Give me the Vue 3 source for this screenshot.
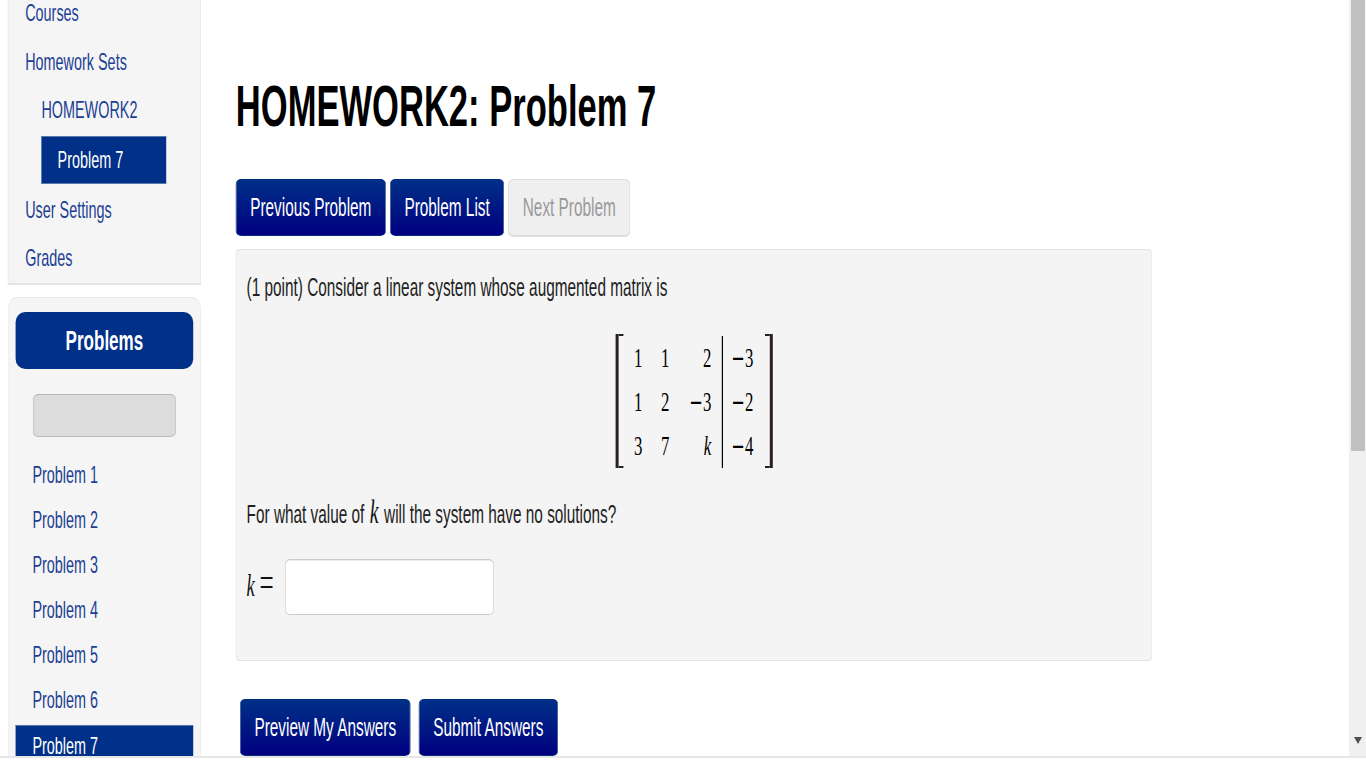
<script setup>
const topNav = [
  { label: "Courses", cls: "" },
  { label: "Homework Sets", cls: "second" },
  { label: "HOMEWORK2", cls: "sub" },
  { label: "Problem 7", cls: "sub active" },
  { label: "User Settings", cls: "" },
  { label: "Grades", cls: "" },
];

const problems = [1, 2, 3, 4, 5, 6, 7];

const matrix = [
  ["1", "1", "2", "−3"],
  ["1", "2", "−3", "−2"],
  ["3", "7", "k", "−4"],
];
</script>

<template>
  <div class="screen">
    <div class="view">
      <div class="page">
        <aside class="sidebar">
          <nav class="nav-box">
            <a
              v-for="item in topNav"
              :key="item.label"
              class="nav-link"
              :class="item.cls"
            >
              <span>{{ item.label }}</span>
            </a>
          </nav>

          <div class="problems-box">
            <h2 class="problems-title">Problems</h2>
            <div class="grey-field"></div>
            <a
              v-for="n in problems"
              :key="n"
              class="problem-link"
              :class="{ current: n === 7 }"
              >Problem {{ n }}</a
            >
          </div>
        </aside>

        <main class="content">
          <h1 class="title">HOMEWORK2: Problem 7</h1>

          <div class="btn-row">
            <a class="btn">Previous Problem</a>
            <a class="btn">Problem List</a>
            <a class="btn disabled">Next Problem</a>
          </div>

          <section class="well">
            <p class="intro">
              (1 point) Consider a linear system whose augmented matrix is
            </p>

            <div class="matrix-wrap">
              <div class="matrix">
                <template v-for="(row, r) in matrix" :key="r">
                  <span
                    v-for="(cell, c) in row"
                    :key="c"
                    class="cell"
                    :class="{ ital: cell === 'k', last: c === 3 }"
                    ><span v-if="cell[0] === '−'" class="minus">−</span
                    >{{ cell.replace("−", "") }}</span
                  >
                </template>
              </div>
            </div>

            <p class="question">
              For what value of <i class="math-k">k</i> will the system have no
              solutions?
            </p>

            <div class="answer">
              <span class="answer-label"><i>k</i> <span class="equals">=</span></span>
              <input class="answer-input" type="text" />
            </div>
          </section>

          <div class="btn-row submit-row">
            <a class="btn">Preview My Answers</a>
            <a class="btn">Submit Answers</a>
          </div>
        </main>
      </div>

      <div class="scrollbar">
        <div class="thumb"></div>
        <div class="track"></div>
        <div class="arrow"></div>
      </div>
    </div>
    <div class="bottom-strip"></div>
  </div>
</template>

<style>
html,
body {
  margin: 0;
  overflow: hidden;
  background: #fff;
}
</style>

<style scoped>
/* the whole page is squeezed horizontally, so x sizes below are px / 0.6 */
.screen {
  width: 1366px;
  height: 768px;
  overflow: hidden;
  display: flex;
  flex-direction: column;
  font-family: "Liberation Sans", Arial, sans-serif;
  font-size: 24px;
  color: #222;
}

.view {
  height: 756px;
  display: flex;
  overflow: hidden;
}

.bottom-strip {
  height: 10px;
  background: #fff;
  border-top: 2px solid #e6e6e8;
}

.page {
  flex: none;
  width: 2248px;
  margin-right: -899px;
  display: flex;
  align-items: flex-start;
  transform: scaleX(0.6);
  transform-origin: left top;
}

.sidebar {
  flex: none;
  width: 322px;
  margin-left: 13px;
}

.nav-box {
  height: 296px;
  box-sizing: border-box;
  margin-top: -11px;
  background: #f5f5f5;
  border: 1px solid #e3e3e3;
  border-top: 0;
  border-bottom-width: 2px;
  display: flex;
  flex-direction: column;
  padding-left: 28px;
}

.nav-link {
  display: block;
  flex: none;
  height: 48px;
  line-height: 48px;
  color: #1c3f94;
}

.nav-link.second {
  margin-top: 1px;
}

.nav-link.sub {
  margin-left: 27px;
  width: 208px;
}

.nav-link.active {
  background: #003087;
  color: #fff;
  box-sizing: border-box;
  padding-left: 27px;
  margin-top: 2px;
  margin-bottom: 2px;
  border-top: 1px solid #5a76ad;
  border-bottom: 1px solid #5a76ad;
  line-height: 46px;
}

.problems-box {
  margin-top: 12px;
  height: 470px;
  box-sizing: border-box;
  background: #f5f5f5;
  border: 1px solid #e8e8e8;
  border-bottom: 0;
  border-radius: 14px 14px 0 0;
  padding: 14px 12px 0;
}

.problems-title {
  margin: 0;
  height: 57px;
  line-height: 57px;
  text-align: center;
  font-size: 28.4px;
  font-weight: bold;
  color: #fff;
  background: #003087;
  border-radius: 16px / 10px;
}

.grey-field {
  height: 41px;
  margin: 25px 29px 15px;
  background: #dcdcdc;
  border: 1px solid #b8b8b8;
  border-radius: 9px / 5px;
}

.problem-link {
  display: block;
  height: 45px;
  line-height: 45px;
  padding-left: 28px;
  color: #1c3f94;
}

.problem-link.current {
  background: #003087;
  color: #fff;
  border-top: 1px solid #5a76ad;
  margin-top: 3px;
  line-height: 40px;
}

.content {
  flex: none;
  width: 1527px;
  margin-left: 58px;
  font-size: 25.6px;
}

.title {
  margin: 74px 0 0;
  height: 65px;
  line-height: 65px;
  font-size: 57.6px;
  font-weight: bold;
  color: #000;
  white-space: nowrap;
}

.btn-row {
  display: flex;
  gap: 7px;
  margin-top: 40px;
}

.btn {
  display: block;
  box-sizing: border-box;
  height: 57px;
  line-height: 55px;
  padding: 0 23px;
  color: #fff;
  white-space: nowrap;
  background: linear-gradient(#003087, #000080);
  border: 1px solid #002a7a;
  border-radius: 9px / 5px;
}

.btn.disabled {
  color: #9a9a9a;
  background: #efefef;
  border-color: #dcdcdc;
  box-shadow: 0 1px 1px #ddd;
}

.well {
  margin-top: 13px;
  height: 412px;
  box-sizing: border-box;
  background: #f4f4f4;
  border: 1px solid #e3e3e3;
  border-radius: 7px / 4px;
  padding: 23px 17px 0;
}

.intro,
.question {
  margin: 0;
  line-height: 28px;
  white-space: nowrap;
}

.matrix-wrap {
  display: flex;
  justify-content: center;
  margin-top: 33px;
}

.matrix {
  display: grid;
  grid-template-columns: 42px 45px 70px 65px;
  grid-auto-rows: 44px;
  padding: 2px 15px 0;
  border-left: 5px solid #2b2020;
  border-right: 5px solid #2b2020;
  position: relative;
  font-family: "Liberation Serif", "Times New Roman", serif;
  font-size: 28px;
  color: #000;
}

.matrix::before,
.matrix::after {
  content: "";
  position: absolute;
  top: 0;
  bottom: 0;
  width: 8px;
  border-top: 2px solid #222;
  border-bottom: 2px solid #222;
}

.matrix::before {
  left: 0;
}

.matrix::after {
  right: 0;
}

.cell {
  text-align: right;
  line-height: 44px;
  padding-right: 17px;
}

.cell.last {
  border-left: 2px solid #000;
  padding-right: 12px;
}

.cell.ital {
  font-style: italic;
}

.minus {
  font-family: "DejaVu Sans", sans-serif;
  font-size: 27px;
}

.question {
  margin-top: 30px;
}

.math-k {
  margin: 0 2px;
  font-family: "Liberation Serif", "Times New Roman", serif;
  font-size: 33px;
  color: #111;
}

.answer {
  display: flex;
  align-items: center;
  margin-top: 31px;
}

.answer-label {
  flex: none;
  width: 64px;
  padding-bottom: 10px;
  line-height: 1;
  font-family: "Liberation Serif", "Times New Roman", serif;
  font-size: 31px;
  color: #111;
  white-space: nowrap;
}

.equals {
  font-size: 42px;
  line-height: 1;
}

.answer-input {
  width: 348px;
  height: 56px;
  box-sizing: border-box;
  padding: 0;
  background: #fff;
  border: 1px solid #ccc;
  border-radius: 9px / 5px;
  box-shadow: inset 0 1px 1px rgba(0, 0, 0, 0.08);
}

.submit-row {
  margin-top: 38px;
  margin-left: 7px;
  gap: 14px;
}

.scrollbar {
  flex: none;
  width: 17px;
  margin-left: auto;
  background: #f0f0f0;
  display: flex;
  flex-direction: column;
  align-items: center;
}

.thumb {
  align-self: stretch;
  height: 451px;
  margin: 0 1px 0 2px;
  background: #c1c1c1;
}

.track {
  flex: 1;
}

.arrow {
  width: 0;
  height: 0;
  margin-bottom: 12px;
  border-left: 4px solid transparent;
  border-right: 4px solid transparent;
  border-top: 7px solid #505050;
}
</style>
